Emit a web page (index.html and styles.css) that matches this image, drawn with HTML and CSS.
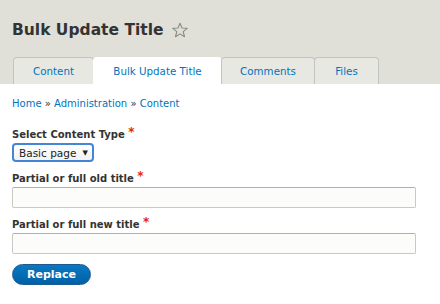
FILE: index.html
```html
<!DOCTYPE html>
<html>
<head>
<meta charset="utf-8">
<link rel="stylesheet" href="styles.css">
</head>
<body>
<div class="header">
  <h1 class="page-title">Bulk Update Title
    <svg class="star" width="16" height="16" viewBox="0 0 16 16"><polygon points="8,1.2 10,6 15.2,6.3 11.2,9.6 12.5,14.7 8,11.9 3.5,14.7 4.8,9.6 0.8,6.3 6,6" fill="none" stroke="#8a8a86" stroke-width="1.1" stroke-linejoin="round"/></svg>
  </h1>
  <ul class="tabs">
    <li class="tab tab-content"><a href="#">Content</a></li>
    <li class="tab tab-active tab-bulk"><a href="#">Bulk Update Title</a></li>
    <li class="tab tab-comments"><a href="#">Comments</a></li>
    <li class="tab tab-files"><a href="#">Files</a></li>
  </ul>
</div>
<div class="content">
  <div class="breadcrumb"><a href="#">Home</a> » <a href="#">Administration</a> » <a href="#">Content</a></div>
  <div class="form-item">
    <label class="label">Select Content Type <span class="req">*</span></label>
    <div class="select">Basic page <span class="arrow">▼</span></div>
  </div>
  <div class="form-item">
    <label class="label">Partial or full old title <span class="req">*</span></label>
    <div class="input"></div>
  </div>
  <div class="form-item">
    <label class="label">Partial or full new title <span class="req">*</span></label>
    <div class="input"></div>
  </div>
  <div class="actions"><span class="button">Replace</span></div>
</div>
</body>
</html>
```
FILE: styles.css
```css
html, body {
  margin: 0;
  padding: 0;
  background: #fff;
  font-family: "DejaVu Sans", "Noto Sans", sans-serif;
  color: #333;
}
a { color: #0074bd; text-decoration: none; }
.header {
  background: #e0e0d8;
  padding: 18px 0 0 12px;
}
.page-title {
  margin: 0;
  font-size: 15.5px;
  font-weight: bold;
  color: #333;
  height: 25px;
  line-height: 25px;
  display: flex;
  align-items: center;
  gap: 8px;
}
.star { display: block; margin-top: -1px; }
.tabs {
  list-style: none;
  margin: 14px 0 0 1px;
  padding: 0;
  display: flex;
}
.tab {
  height: 27px;
  box-sizing: border-box;
  border: 1px solid #c4c4bf;
  border-bottom: none;
  border-radius: 4px 4px 0 0;
  background: #e8e8e3;
  display: flex;
  align-items: center;
  justify-content: center;
  font-size: 10.3px;
  margin-right: -1px;
}
.tab-active { background: #fff; border-color: #fff; }
.tab-content { width: 81px; }
.tab-bulk { width: 129px; }
.tab-comments { width: 94px; }
.tab-files { width: 65px; }
.content { padding: 13px 12px 0 12px; }
.breadcrumb { font-size: 10px; height: 14px; line-height: 14px; margin-bottom: 17px; }
.form-item { margin-bottom: 10px; }
.label {
  display: block;
  font-size: 10px;
  font-weight: bold;
  height: 14px;
  line-height: 14px;
  margin-bottom: 1px;
}
.req { color: #e32700; font-size: 12px; line-height: 0; position: relative; top: -2px; }
.select {
  display: inline-flex;
  align-items: center;
  box-sizing: border-box;
  height: 19px;
  width: 82px;
  padding: 0 0 0 5px;
  border: 2px solid #4585d6;
  border-radius: 4px;
  background: linear-gradient(#fff, #f2f2f2);
  font-size: 10.5px;
  color: #222;
  gap: 6px;
  white-space: nowrap;
  vertical-align: top;
}
.arrow { font-size: 7px; }
.input {
  box-sizing: border-box;
  height: 21px;
  width: 404px;
  border: 1px solid #c8c8c4;
  border-top-color: #b0b0ab;
  background: #fcfcfa;
  border-radius: 2px;
}
.actions { margin-top: 10px; }
.button {
  display: inline-flex;
  align-items: center;
  justify-content: center;
  box-sizing: border-box;
  width: 79px;
  height: 21px;
  border-radius: 11px;
  background: linear-gradient(#0a78c2, #0061a6);
  border: 1px solid #1d5a8f;
  color: #fff;
  font-weight: bold;
  font-size: 11px;
  vertical-align: top;
}
```
